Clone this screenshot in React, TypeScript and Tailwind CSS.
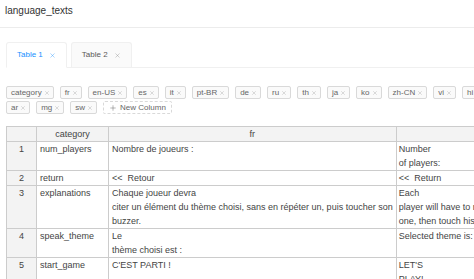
import React from 'react';
import { X, Plus } from 'lucide-react';

const langs = ['category', 'fr', 'en-US', 'es', 'it', 'pt-BR', 'de', 'ru', 'th', 'ja', 'ko', 'zh-CN', 'vi', 'hi', 'ar', 'mg', 'sw'];

const rows = [
  { id: 1, key: 'num_players', fr: 'Nombre de joueurs :', en: 'Number\nof players:' },
  { id: 2, key: 'return', fr: '<<  Retour', en: '<<  Return' },
  {
    id: 3,
    key: 'explanations',
    fr: 'Chaque joueur devra\nciter un élément du thème choisi, sans en répéter un, puis toucher son\nbuzzer.',
    en: 'Each\nplayer will have to name\none, then touch his buzzer.',
  },
  { id: 4, key: 'speak_theme', fr: 'Le\nthème choisi est :', en: 'Selected theme is:' },
  { id: 5, key: 'start_game', fr: "C'EST PARTI !", en: "LET'S\nPLAY!" },
];

const App: React.FC = () => {
  return (
    <div
      className="w-[474px] h-[279px] overflow-hidden bg-white text-[#333]"
      style={{ fontFamily: '"Liberation Sans", Arial, sans-serif' }}
    >
      {/* header */}
      <div className="h-[28px] border-b border-[#ececec] pt-[6px] pl-[5px] text-[10px] leading-[10px] text-[#333]">
        language_texts
      </div>

      {/* tabs */}
      <div className="mt-[15px] ml-[6px] flex items-end gap-[4px] border-b border-[#f0f0f0] h-[25px]">
        <div className="h-[26px] -mb-px px-[10px] flex items-center gap-[6px] bg-white border border-[#f0f0f0] border-b-white rounded-t-[3px] text-[8px] text-[#1890ff]">
          Table 1
          <X size={7} strokeWidth={1.3} />
        </div>
        <div className="h-[25px] px-[10px] flex items-center gap-[6px] bg-[#fafafa] border border-[#f0f0f0] border-b-0 rounded-t-[3px] text-[8px] text-[#595959]">
          Table 2
          <X size={7} strokeWidth={1.3} className="text-[#888]" />
        </div>
      </div>

      {/* column chips */}
      <div className="mt-[18px] pl-[6px] w-[500px] flex flex-wrap gap-x-[6px] gap-y-[2px]">
        {langs.map((l) => (
          <div
            key={l}
            className="h-[13px] pl-[4px] pr-[3px] flex items-center gap-[2px] border border-[#d9d9d9] rounded-[2px] bg-[#fafafa] text-[8px] text-[#666] whitespace-nowrap"
          >
            {l}
            <X size={6} strokeWidth={1.4} className="text-[#999]" />
          </div>
        ))}
        <div className="h-[13px] px-[5px] flex items-center gap-[3px] border border-dashed border-[#d9d9d9] rounded-[2px] text-[8px] text-[#666] whitespace-nowrap">
          <Plus size={8} strokeWidth={1.4} />
          New Column
        </div>
      </div>

      {/* grid */}
      <div className="mt-[12px] ml-[6px] w-[600px]">
        <table className="border-collapse table-fixed text-[9px] leading-[14px] text-[#444]">
          <colgroup>
            <col className="w-[30px]" />
            <col className="w-[72px]" />
            <col className="w-[286px]" />
            <col className="w-[200px]" />
          </colgroup>
          <thead>
            <tr className="bg-[#f3f3f3]">
              <th className="border border-[#ccc] h-[14px] font-normal" />
              <th className="border border-[#ccc] font-normal text-center">category</th>
              <th className="border border-[#ccc] font-normal text-center">fr</th>
              <th className="border border-[#ccc] font-normal" />
            </tr>
          </thead>
          <tbody>
            {rows.map((r) => (
              <tr key={r.id}>
                <td className="border border-[#ccc] bg-[#f3f3f3] text-center align-top">{r.id}</td>
                <td className="border border-[#ccc] px-[3px] align-top whitespace-pre">{r.key}</td>
                <td className="border border-[#ccc] px-[3px] align-top whitespace-pre">{r.fr}</td>
                <td className="border border-[#ccc] px-[2px] align-top whitespace-pre">{r.en}</td>
              </tr>
            ))}
          </tbody>
        </table>
      </div>
    </div>
  );
};

export default App;
